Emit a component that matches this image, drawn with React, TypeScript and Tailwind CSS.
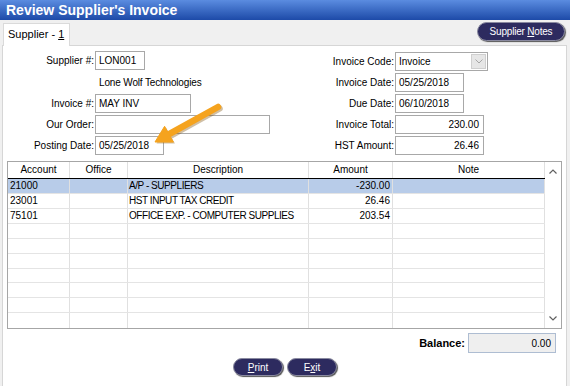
import React from "react";

const navyBtn =
  "flex items-center justify-center rounded-full bg-[#2d2b5f] text-white border border-[#8a8aa0] shadow-[1px_1px_1px_#555]";

function Field({
  label,
  value,
  w,
  right,
}: {
  label: string;
  value: string;
  w: string;
  right?: boolean;
}) {
  return (
    <div className="flex items-center h-[19px]">
      <div className="w-[92px] text-right pr-[1px] whitespace-nowrap">{label}</div>
      <div
        className={`${w} h-[19px] border border-[#a8a8a8] bg-white flex items-center ${
          right ? "justify-end pr-[4px]" : "pl-[3px]"
        }`}
      >
        {value}
      </div>
    </div>
  );
}

const rows = [
  { acc: "21000", desc: "A/P - SUPPLIERS", amt: "-230.00", sel: true },
  { acc: "23001", desc: "HST INPUT TAX CREDIT", amt: "26.46" },
  { acc: "75101", desc: "OFFICE EXP. - COMPUTER SUPPLIES", amt: "203.54" },
  { acc: "", desc: "", amt: "" },
  { acc: "", desc: "", amt: "" },
  { acc: "", desc: "", amt: "" },
  { acc: "", desc: "", amt: "" },
  { acc: "", desc: "", amt: "" },
  { acc: "", desc: "", amt: "" },
  { acc: "", desc: "", amt: "" },
];

export default function App() {
  return (
    <div className="relative w-[570px] h-[386px] overflow-hidden bg-[#f0f0f0] text-[10px] text-black font-['Liberation_Sans',Arial,sans-serif]">
      {/* Title bar */}
      <div className="h-[20px] flex items-center pl-[6px] text-white font-bold text-[14px] bg-linear-to-b from-[#5b8ce0] to-[#1d4aa8]">
        Review Supplier's Invoice
      </div>

      {/* Tab row */}
      <div className="h-[25px] flex items-start justify-between">
        <div className="relative z-10 mt-[3px] ml-[3px] w-[67px] h-[23px] bg-white border-t border-l border-r border-[#dadada] pl-[4px] pt-[4px] text-[11px] leading-[13px]">
          Supplier - <span className="underline">1</span>
        </div>
        <div className={`${navyBtn} mt-[2px] mr-[5px] w-[88px] h-[19px] tracking-[-0.2px]`}>
          Supplier&nbsp;<span className="underline">N</span>otes
        </div>
      </div>

      {/* Panel */}
      <div className="ml-[2px] w-[565px] h-[341px] bg-white border-l border-r border-t border-[#d6d6d6]">
        {/* Form */}
        <div className="flex">
          <div className="w-[300px] pt-[5px] flex flex-col">
            <Field label="Supplier #:" value="LON001" w="w-[50px]" />
            <div className="h-[24px] flex items-center pl-[96px] tracking-[-0.15px]">Lone Wolf Technologies</div>
            <div className="flex flex-col gap-[2px]">
              <Field label="Invoice #:" value="MAY INV" w="w-[96px]" />
              <Field label="Our Order:" value="" w="w-[175px]" />
              <Field label="Posting Date:" value="05/25/2018" w="w-[69px]" />
            </div>
          </div>
          <div className="pt-[6px] flex flex-col gap-[2px]">
            <div className="flex items-center h-[19px]">
              <div className="w-[92px] text-right pr-[1px]">Invoice Code:</div>
              <div className="w-[93px] h-[19px] border border-[#a8a8a8] bg-white flex items-center justify-between pl-[3px] pr-[1px]">
                <span>Invoice</span>
                <div className="w-[15px] h-[15px] bg-[#e6e6e6] border border-[#cfcfcf] flex items-center justify-center">
                  <svg width="8" height="5" viewBox="0 0 8 5">
                    <path d="M0.5 0.5 L4 4 L7.5 0.5" fill="none" stroke="#a6a6a6" strokeWidth="1" />
                  </svg>
                </div>
              </div>
            </div>
            <Field label="Invoice Date:" value="05/25/2018" w="w-[69px]" />
            <Field label="Due Date:" value="06/10/2018" w="w-[69px]" />
            <Field label="Invoice Total:" value="230.00" w="w-[89px]" right />
            <Field label="HST Amount:" value="26.46" w="w-[89px]" right />
          </div>
        </div>

        {/* Table */}
        <div className="mt-[6px] ml-[4px] w-[555px] h-[168px] border border-[#a6a6a6] flex">
          <div className="flex flex-col">
            <div className="flex h-[17px] border-b border-black">
              <div className="w-[62px] border-r border-[#e0e0e0] text-center leading-[16px]">Account</div>
              <div className="w-[58px] border-r border-[#e0e0e0] text-center leading-[16px]">Office</div>
              <div className="w-[181px] border-r border-[#e0e0e0] text-center leading-[16px]">Description</div>
              <div className="w-[84px] border-r border-[#e0e0e0] text-center leading-[16px]">Amount</div>
              <div className="w-[152px] border-r border-[#e0e0e0] text-center leading-[16px]">Note</div>
            </div>
            {rows.map((r, i) => (
              <div
                key={i}
                className={`flex h-[15px] ${i < rows.length - 1 ? "border-b border-[#e4e4e4]" : ""} ${
                  r.sel ? "bg-[#b8cce9]" : ""
                }`}
              >
                <div className="w-[62px] border-r border-[#e0e0e0] pl-[2px] leading-[14px]">{r.acc}</div>
                <div className="w-[58px] border-r border-[#e0e0e0]"></div>
                <div className="w-[181px] border-r border-[#e0e0e0] pl-[1px] leading-[14px] whitespace-nowrap overflow-hidden tracking-[-0.45px]">
                  {r.desc}
                </div>
                <div className="w-[84px] border-r border-[#e0e0e0] text-right pr-[2px] leading-[14px]">{r.amt}</div>
                <div className="w-[152px] border-r border-[#e0e0e0]"></div>
              </div>
            ))}
          </div>
          <div className="flex-1 flex flex-col items-center justify-between pt-[7px] pb-[7px] bg-white">
            <svg width="8" height="5" viewBox="0 0 8 5">
              <path d="M0.5 4.5 L4 1 L7.5 4.5" fill="none" stroke="#606060" strokeWidth="1.2" />
            </svg>
            <svg width="8" height="5" viewBox="0 0 8 5">
              <path d="M0.5 0.5 L4 4 L7.5 0.5" fill="none" stroke="#606060" strokeWidth="1.2" />
            </svg>
          </div>
        </div>

        {/* Balance */}
        <div className="mt-[4px] flex items-center justify-end pr-[10px] gap-[3px]">
          <span className="font-bold text-[11px]">Balance:</span>
          <div className="w-[88px] h-[20px] bg-[#efefef] border border-[#aebdd2] flex items-center justify-end pr-[4px]">
            0.00
          </div>
        </div>

        {/* Buttons */}
        <div className="mt-[5px] flex justify-center gap-[4px] pl-[1px]">
          <div className={`${navyBtn} w-[50px] h-[18px]`}>
            <span className="underline">P</span>rint
          </div>
          <div className={`${navyBtn} w-[50px] h-[18px]`}>
            E<span className="underline">x</span>it
          </div>
        </div>
      </div>

      {/* Orange arrow annotation */}
      <svg className="absolute left-[150px] top-[100px]" width="80" height="52" viewBox="0 0 80 52">
        <g transform="translate(1.5,1.5)" opacity="0.35">
          <line x1="68" y1="7" x2="20" y2="33.6" stroke="#7a4a00" strokeWidth="6.5" strokeLinecap="round" />
          <polygon points="5,42 23.4,42.1 14.6,26.3" fill="#7a4a00" />
        </g>
        <line x1="68" y1="7" x2="20" y2="33.6" stroke="#f5a31e" strokeWidth="6.5" strokeLinecap="round" />
        <polygon points="5,42 23.4,42.1 14.6,26.3" fill="#f5a31e" stroke="#f5a31e" strokeWidth="1" strokeLinejoin="round" />
      </svg>
    </div>
  );
}
